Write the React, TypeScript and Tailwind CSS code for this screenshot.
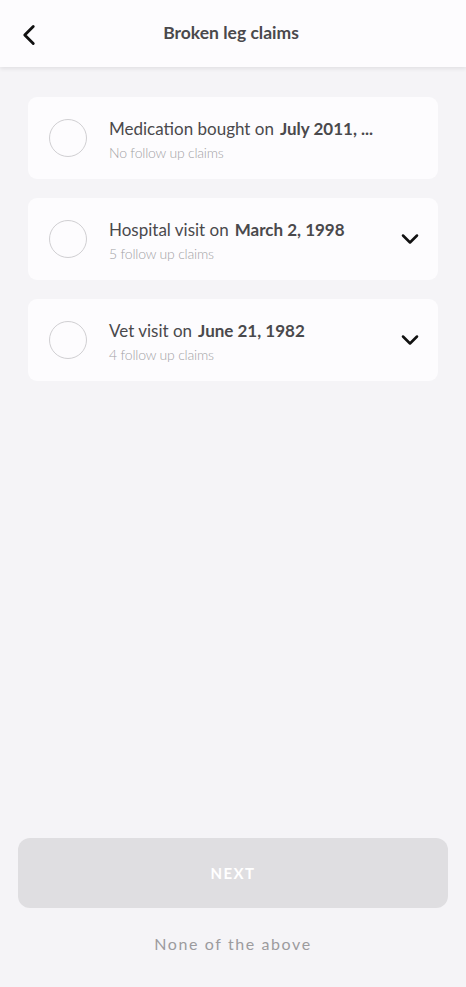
import { ChevronLeft, ChevronDown } from 'lucide-react';

type Claim = {
    label: string;
    date: string;
    followUps: string;
    expandable: boolean;
};

const claims: Claim[] = [
    { label: 'Medication bought on', date: 'July 2011, ...', followUps: 'No follow up claims', expandable: false },
    { label: 'Hospital visit on', date: 'March 2, 1998', followUps: '5 follow up claims', expandable: true },
    { label: 'Vet visit on', date: 'June 21, 1982', followUps: '4 follow up claims', expandable: true },
];

function ClaimCard({ claim }: { claim: Claim }) {
    return (
        <div className="flex items-center h-[82px] bg-[#fdfcfe] rounded-[9px] pl-[21px] pr-[14px]">
            <div className="w-[38px] h-[38px] rounded-full border-[1.5px] border-[#d0cfd2] shrink-0" />
            <div className="flex-1 ml-[22px] mt-[3px]">
                <p className="text-[17px] leading-[22px] text-[#4a494c]">
                    {claim.label}
                    <span className="font-bold ml-[6px]">{claim.date}</span>
                </p>
                <p className="text-[14px] leading-[18px] mt-[4px] text-[#a3a2a5] font-light tracking-[-0.2px]">
                    {claim.followUps}
                </p>
            </div>
            {claim.expandable && (
                <ChevronDown size={28} strokeWidth={2.2} className="text-[#111] shrink-0" />
            )}
        </div>
    );
}

export default function App() {
    return (
        <div
            className="h-screen flex flex-col bg-[#f5f4f7]"
            style={{ fontFamily: 'Lato, "Noto Sans", sans-serif' }}
        >
            <header className="relative h-[67px] bg-[#fdfcfe] flex items-center justify-center shadow-[0_2px_4px_rgba(0,0,0,0.08)] shrink-0">
                <button className="absolute left-[12px] top-[18px] text-[#111]">
                    <ChevronLeft size={34} strokeWidth={2} />
                </button>
                <h1 className="text-[17.5px] font-bold text-[#4a494c] mr-[4px]">Broken leg claims</h1>
            </header>

            <div className="flex flex-col gap-[19px] px-[28px] pt-[30px]">
                {claims.map((c) => (
                    <ClaimCard key={c.label} claim={c} />
                ))}
            </div>

            <div className="flex-1" />

            <div className="px-[18px] pb-[31px]">
                <button className="w-full h-[70px] rounded-[12px] bg-[#dfdee1] text-white font-bold text-[15px] tracking-[1.5px]">
                    NEXT
                </button>
                <p className="text-center mt-[24px] text-[16px] leading-[24px] tracking-[1.6px] text-[#9c9b9e]">
                    None of the above
                </p>
            </div>
        </div>
    );
}
